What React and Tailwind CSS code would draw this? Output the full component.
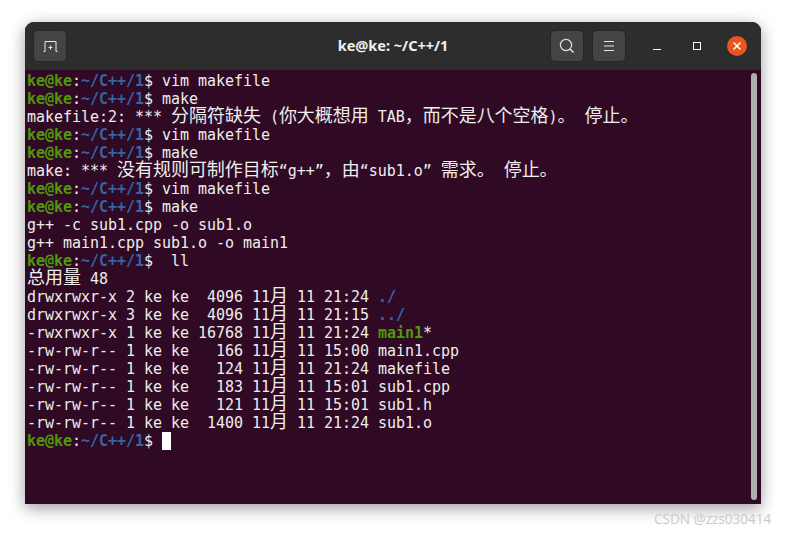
const P = () => (
  <>
    <span className="font-bold text-[#4e9a06]">ke@ke</span>
    <span>:</span>
    <span className="font-bold text-[#3465a4]">~/C++/1</span>
    <span>$</span>
  </>
);

function T({ s }) {
  const parts = s.split(/([\u3000-\u303f\u4e00-\u9fff\uff00-\uffef]+)/);
  return parts.map((p, i) =>
    i % 2 ? (
      <span key={i} className="font-['Noto_Sans_CJK_SC',sans-serif] text-[18px] leading-[0]">{p}</span>
    ) : (
      <span key={i}>{p}</span>
    )
  );
}

const L = ({ children }) => <div className="h-[18px] leading-[18px] whitespace-pre">{children}</div>;
const Cmd = ({ c }) => <L><P />{c}</L>;
const Ls = ({ a, b, c = "" }) => <L><T s={a} />{b ? <span className={c}>{b}</span> : null}</L>;

const Btn = ({ children }) => (
  <div className="w-[34px] h-[32px] rounded-[5px] bg-[#444444] border border-[#262626] flex items-center justify-center">
    {children}
  </div>
);

export default function App() {
  return (
    <div className="relative w-[786px] h-[533px] bg-white overflow-hidden pt-[22px] pl-[25px]">
      <div className="relative w-[736px] h-[482px] flex flex-col rounded-t-[9px] overflow-hidden bg-[#300a24] shadow-[0_4px_16px_rgba(0,0,0,0.4)]">
        <div className="h-[48px] shrink-0 bg-[#2d2d2d] flex items-center pl-[8px] pr-[14px] relative">
          <Btn>
            <svg width="16" height="16" viewBox="0 0 16 16" fill="none" stroke="#e8e8e8" strokeWidth="1">
              <path d="M1.5 13.5h1.5V3.5h11v10H15.5" />
              <path d="M8.5 7.5v4M6.5 9.5h4" />
            </svg>
          </Btn>
          <div className="absolute left-0 right-0 top-0 h-[48px] flex items-center justify-center text-[14.5px] font-bold text-[#f0f0f0] font-['Noto_Sans',sans-serif]">
            ke@ke: ~/C++/1
          </div>
          <div className="ml-auto flex items-center relative">
            <div className="mr-[8px]">
              <Btn>
                <svg width="16" height="16" viewBox="0 0 16 16" fill="none" stroke="#e0e0e0" strokeWidth="1.2">
                  <circle cx="7" cy="7" r="5.6" />
                  <path d="M11 11l3.5 3.5" strokeWidth="1.6" />
                </svg>
              </Btn>
            </div>
            <Btn>
              <svg width="16" height="16" viewBox="0 0 16 16" fill="none" stroke="#e8e8e8" strokeWidth="1">
                <path d="M3 3.5h10M3 8h10M3 12.5h10" />
              </svg>
            </Btn>
            <div className="w-[27px]" />
            <div className="w-[8px] h-[1px] bg-white mt-[6px]" />
            <div className="w-[32px]" />
            <div className="w-[8px] h-[8px] border border-white" />
            <div className="w-[26px]" />
            <div className="w-[20px] h-[20px] rounded-full bg-[#e95420] flex items-center justify-center">
              <svg width="10" height="10" viewBox="0 0 10 10" stroke="#ffffff" strokeWidth="1.5">
                <path d="M1.5 1.5l7 7M8.5 1.5l-7 7" />
              </svg>
            </div>
          </div>
        </div>
        <div className="flex-1 pl-[2px] pt-[2px] text-[15px] text-[#eeeeec] font-['DejaVu_Sans_Mono',monospace] tracking-[-0.03px]">
          <Cmd c=" vim makefile" />
          <Cmd c=" make" />
          <L><T s="makefile:2: *** 分隔符缺失 (你大概想用 TAB，而不是八个空格)。 停止。" /></L>
          <Cmd c=" vim makefile" />
          <Cmd c=" make" />
          <L><T s="make: *** 没有规则可制作目标“g++”，由“sub1.o” 需求。 停止。" /></L>
          <Cmd c=" vim makefile" />
          <Cmd c=" make" />
          <L>g++ -c sub1.cpp -o sub1.o</L>
          <L>g++ main1.cpp sub1.o -o main1</L>
          <Cmd c="  ll" />
          <L><T s="总用量 48" /></L>
          <Ls a="drwxrwxr-x 2 ke ke  4096 11月 11 21:24 " b="./" c="font-bold text-[#3465a4]" />
          <Ls a="drwxrwxr-x 3 ke ke  4096 11月 11 21:15 " b="../" c="font-bold text-[#3465a4]" />
          <L>
            <T s="-rwxrwxr-x 1 ke ke 16768 11月 11 21:24 " />
            <span className="font-bold text-[#4e9a06]">main1</span>*
          </L>
          <Ls a="-rw-rw-r-- 1 ke ke   166 11月 11 15:00 main1.cpp" />
          <Ls a="-rw-rw-r-- 1 ke ke   124 11月 11 21:24 makefile" />
          <Ls a="-rw-rw-r-- 1 ke ke   183 11月 11 15:01 sub1.cpp" />
          <Ls a="-rw-rw-r-- 1 ke ke   121 11月 11 15:01 sub1.h" />
          <Ls a="-rw-rw-r-- 1 ke ke  1400 11月 11 21:24 sub1.o" />
          <L>
            <P /> <span className="inline-block w-[9px] h-[18px] bg-white align-top" />
          </L>
        </div>
        <div className="absolute right-[4px] top-[51px] bottom-[4px] w-[6px] rounded-full bg-[#b0aeb0]" />
      </div>
      <div className="absolute left-[654px] top-[511px] text-[13.5px] leading-[16px] text-[#cccccc] font-['Noto_Sans',sans-serif]">
        CSDN @zzs030414
      </div>
    </div>
  );
}
